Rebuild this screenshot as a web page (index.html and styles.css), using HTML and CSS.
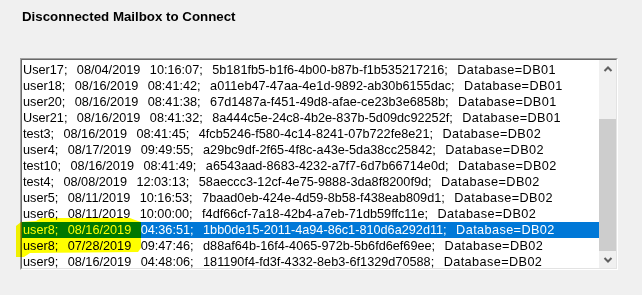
FILE: index.html
```html
<!DOCTYPE html>
<html>
<head>
<meta charset="utf-8">
<link rel="stylesheet" href="styles.css">
</head>
<body>
<div class="page">
  <div class="title">Disconnected Mailbox to Connect</div>
  <div class="listbox">
    <div class="listbox-inner">
      <div class="items">
        <div class="row">User17;  08/04/2019  10:16:07;  5b181fb5-b1f6-4b00-b87b-f1b535217216;  <span class="db">Database=DB01</span></div>
        <div class="row">user18;  08/16/2019  08:41:42;  a011eb47-47aa-4e1d-9892-ab30b6155dac;  <span class="db">Database=DB01</span></div>
        <div class="row">user20;  08/16/2019  08:41:38;  67d1487a-f451-49d8-afae-ce23b3e6858b;  <span class="db">Database=DB01</span></div>
        <div class="row">User21;  08/16/2019  08:41:32;  8a444c5e-24c8-4b2e-837b-5d09dc92252f;  <span class="db">Database=DB01</span></div>
        <div class="row">test3;  08/16/2019  08:41:45;  4fcb5246-f580-4c14-8241-07b722fe8e21;  <span class="db">Database=DB02</span></div>
        <div class="row">user4;  08/17/2019  09:49:55;  a29bc9df-2f65-4f8c-a43e-5da38cc25842;  <span class="db">Database=DB02</span></div>
        <div class="row">test10;  08/16/2019  08:41:49;  a6543aad-8683-4232-a7f7-6d7b66714e0d;  <span class="db">Database=DB02</span></div>
        <div class="row">test4;  08/08/2019  12:03:13;  58aeccc3-12cf-4e75-9888-3da8f8200f9d;  <span class="db">Database=DB02</span></div>
        <div class="row">user5;  08/11/2019  10:16:53;  7baad0eb-424e-4d59-8b58-f438eab809d1;  <span class="db">Database=DB02</span></div>
        <div class="row">user6;  08/11/2019  10:00:00;  f4df66cf-7a18-42b4-a7eb-71db59ffc11e;  <span class="db">Database=DB02</span></div>
        <div class="row selected">user8;  08/16/2019  04:36:51;  1bb0de15-2011-4a94-86c1-810d6a292d11;  <span class="db">Database=DB02</span></div>
        <div class="row">user8;  07/28/2019  09:47:46;  d88af64b-16f4-4065-972b-5b6fd6ef69ee;  <span class="db">Database=DB02</span></div>
        <div class="row">user9;  08/16/2019  04:48:06;  181190f4-fd3f-4332-8eb3-6f1329d70588;  <span class="db">Database=DB02</span></div>
      </div>
      <div class="scrollbar">
        <div class="sb-btn">
          <svg width="17" height="17" viewBox="0 0 17 17"><polyline points="5.5,11 9,7.5 12.5,11" fill="none" stroke="#606060" stroke-width="2"/></svg>
        </div>
        <div class="sb-track">
          <div class="sb-space"></div>
          <div class="sb-thumb"></div>
        </div>
        <div class="sb-btn">
          <svg width="17" height="17" viewBox="0 0 17 17"><polyline points="5.5,7 9,10.5 12.5,7" fill="none" stroke="#606060" stroke-width="2"/></svg>
        </div>
      </div>
    </div>
  </div>
  <svg class="highlighter" width="642" height="295" viewBox="0 0 642 295">
    <path d="M16,226 L21,222 L36,221 L41,218 L130,218 L135,220 L141,222 L141,248 L138,252 L30,253 L24,257 L16,257 Z" fill="#ffff00"/>
  </svg>
</div>
</body>
</html>
```
FILE: styles.css
```css
html, body {
  margin: 0;
  padding: 0;
  background: #f0f0f0;
}
.page {
  position: relative;
  width: 642px;
  height: 295px;
  overflow: hidden;
  font-family: "Liberation Sans", Arial, sans-serif;
}
.title {
  padding: 9px 0 0 22px;
  font-size: 13.3px;
  line-height: 16px;
  font-weight: bold;
  color: #000;
}
.listbox {
  margin: 33px 0 0 20px;
  width: 598px;
  height: 212px;
  box-sizing: border-box;
  border: 1px solid;
  border-color: #a0a0a0 #ffffff #ffffff #a0a0a0;
}
.listbox-inner {
  height: 100%;
  box-sizing: border-box;
  border: 1px solid;
  border-color: #696969 #e3e3e3 #e3e3e3 #696969;
  background: #fff;
  display: flex;
}
.items {
  flex: 1;
  overflow: hidden;
  padding-top: 2px;
}
.row {
  height: 16px;
  line-height: 16px;
  font-size: 12.7px;
  word-spacing: 1.2px;
  color: #000;
  white-space: pre;
  padding-left: 1px;
}
.db {
  letter-spacing: 0.4px;
}
.row.selected {
  background: #0078d7;
  color: #fff;
}
.scrollbar {
  width: 17px;
  display: flex;
  flex-direction: column;
  background: #f0f0f0;
}
.sb-btn {
  height: 17px;
}
.sb-btn svg {
  display: block;
}
.sb-track {
  flex: 1;
  display: flex;
  flex-direction: column;
}
.sb-space {
  height: 42px;
}
.sb-thumb {
  height: 132px;
  background: #cdcdcd;
}
.highlighter {
  position: absolute;
  left: 0;
  top: 0;
  pointer-events: none;
  mix-blend-mode: multiply;
}
```
